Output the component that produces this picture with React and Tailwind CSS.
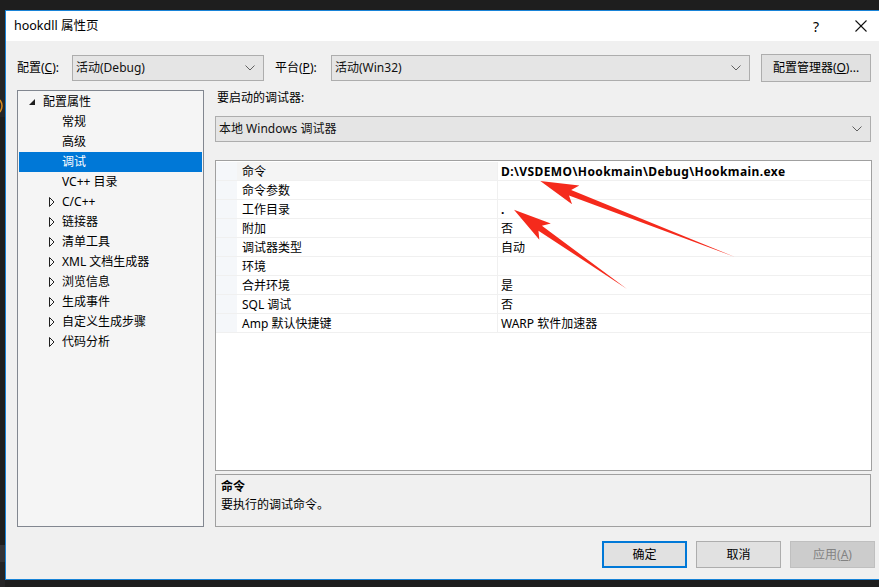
import React from "react";

const treeItems = [
  { label: "配置属性", level: 0 },
  { label: "常规", level: 1 },
  { label: "高级", level: 1 },
  { label: "调试", level: 1, selected: true },
  { label: "VC++ 目录", level: 1 },
  { label: "C/C++", level: 1, expander: true },
  { label: "链接器", level: 1, expander: true },
  { label: "清单工具", level: 1, expander: true },
  { label: "XML 文档生成器", level: 1, expander: true },
  { label: "浏览信息", level: 1, expander: true },
  { label: "生成事件", level: 1, expander: true },
  { label: "自定义生成步骤", level: 1, expander: true },
  { label: "代码分析", level: 1, expander: true },
];

const props = [
  { name: "命令", value: "D:\\VSDEMO\\Hookmain\\Debug\\Hookmain.exe", bold: true, active: true },
  { name: "命令参数", value: "" },
  { name: "工作目录", value: ".", bold: true },
  { name: "附加", value: "否" },
  { name: "调试器类型", value: "自动" },
  { name: "环境", value: "" },
  { name: "合并环境", value: "是" },
  { name: "SQL 调试", value: "否" },
  { name: "Amp 默认快捷键", value: "WARP 软件加速器" },
];

function Chevron() {
  return (
    <svg width="10" height="6" viewBox="0 0 10 6" className="shrink-0">
      <polyline points="0.5,0.5 5,5 9.5,0.5" fill="none" stroke="#606060" strokeWidth="1" />
    </svg>
  );
}

function Combo({ width, children }) {
  return (
    <div
      className={`${width} h-[26px] flex items-center justify-between pl-[3px] pr-[8px] bg-[#e5e5e5] border border-[#adadad] text-[#111]`}
    >
      <span>{children}</span>
      <Chevron />
    </div>
  );
}

function Arrow({ x, y, angle, len }) {
  // tail at (x,y), pointing along angle
  const L = len;
  return (
    <g transform={`translate(${x} ${y}) rotate(${angle})`}>
      <polygon
        points={`0,0 ${L - 32},-3 ${L - 38},-10 ${L},0 ${L - 38},10 ${L - 32},3`}
        fill="#f52a1c"
      />
    </g>
  );
}

export default function App() {
  return (
    <div className="relative w-[879px] h-[587px] overflow-hidden bg-[#1e1e1e] font-['Noto_Sans','Noto_Sans_CJK_SC',sans-serif] text-[12px] text-black">
      <div className="flex h-full">
        {/* editor edge behind the dialog */}
        <div className="w-[5px] shrink-0 flex flex-col">
          <div className="h-[10px] bg-[#1e1e1e]" />
          <div className="h-[85px] bg-[#252526]" />
          <div className="h-[22px] bg-[#252526] flex items-center">
            <svg width="5" height="14" viewBox="0 0 5 14">
              <path d="M0 1 Q4 7 0 13" fill="none" stroke="#d7891c" strokeWidth="1.5" />
            </svg>
          </div>
          <div className="h-[428px] bg-[#1e1e1e]" />
          <div className="h-[17px] bg-[#333337]" />
          <div className="flex-1 bg-[#252526]" />
        </div>

        {/* dialog */}
        <div className="mt-[10px] w-[882px] h-[570px] shrink-0 border-t border-l border-b border-[#1883d7] flex flex-col bg-[#f0f0f0]">
          {/* title bar */}
          <div className="h-[30px] bg-white flex items-center pl-[8px] pr-[16px]">
            <span className="text-[12.5px]">hookdll 属性页</span>
            <div className="ml-auto flex items-center">
              <span className="text-[14px] mr-[36px]">?</span>
              <svg width="12" height="12" viewBox="0 0 12 12" className="mr-[4px]">
                <line x1="0.5" y1="0.5" x2="11.5" y2="11.5" stroke="#111" strokeWidth="1.1" />
                <line x1="11.5" y1="0.5" x2="0.5" y2="11.5" stroke="#111" strokeWidth="1.1" />
              </svg>
            </div>
          </div>

          {/* body */}
          <div className="flex-1 flex flex-col pl-[11px] pt-[13px]">
            {/* config row */}
            <div className="h-[28px] flex items-center">
              <span className="w-[55px]">
                配置(<u>C</u>):
              </span>
              <Combo width="w-[192px]">活动(Debug)</Combo>
              <span className="w-[56px] ml-[11px]">
                平台(<u>P</u>):
              </span>
              <Combo width="w-[419px]">活动(Win32)</Combo>
              <div className="ml-[11px] w-[110px] h-[28px] flex items-center justify-center bg-[#e1e1e1] border border-[#adadad]">
                配置管理器(<u>O</u>)...
              </div>
            </div>

            {/* main area */}
            <div className="mt-[8px] h-[437px] flex">
              {/* tree */}
              <div className="w-[187px] h-full border border-[#828790] bg-[#f5f5f5] px-[1px] pt-[1px]">
                {treeItems.map((item) => (
                  <div
                    key={item.label}
                    className={`h-[20px] flex items-center ${
                      item.selected ? "bg-[#0078d7] text-white" : ""
                    }`}
                  >
                    {item.level === 0 ? (
                      <>
                        <svg width="6" height="6" viewBox="0 0 6 6" className="ml-[10px]">
                          <polygon points="6,0 6,6 0,6" fill="#1e1e1e" />
                        </svg>
                        <span className="ml-[8px]">{item.label}</span>
                      </>
                    ) : (
                      <>
                        <span className="w-[30px] shrink-0" />
                        <span className="w-[13px] shrink-0 flex items-center">
                          {item.expander && (
                            <svg width="6" height="10" viewBox="0 0 6 10">
                              <polygon points="0.5,0.5 5,5 0.5,9.5" fill="none" stroke="#1e1e1e" strokeWidth="1" />
                            </svg>
                          )}
                        </span>
                        <span>{item.label}</span>
                      </>
                    )}
                  </div>
                ))}
              </div>

              {/* right column */}
              <div className="ml-[11px] w-[657px] flex flex-col">
                <div className="h-[16px] flex items-center pl-[2px]">要启动的调试器:</div>
                <div className="mt-[10px]">
                  <Combo width="w-[656px]">本地 Windows 调试器</Combo>
                </div>

                {/* property grid */}
                <div className="mt-[18px] h-[311px] border border-[#a0a0a0] bg-white pt-[1px]">
                  {props.map((p) => (
                    <div key={p.name} className="h-[19px] flex border-b border-[#f0f0f0]">
                      <div className="w-[21px] shrink-0 bg-[#f5f7fa]" />
                      <div
                        className={`w-[261px] shrink-0 pl-[5px] pt-[2px] flex items-center border-r border-[#f0f0f0] ${
                          p.active ? "bg-[#f4f4f4]" : ""
                        }`}
                      >
                        {p.name}
                      </div>
                      <div
                        className={`flex-1 pl-[3px] pt-[2px] flex items-center ${
                          p.bold ? "font-bold tracking-[0.4px]" : ""
                        }`}
                      >
                        {p.value}
                      </div>
                    </div>
                  ))}
                </div>

                {/* description */}
                <div className="mt-[3px] flex-1 border border-[#a0a0a0] bg-[#f0f0f0] pl-[5px] pt-[3px] mr-[1px]">
                  <div className="font-bold leading-[18px]">命令</div>
                  <div className="leading-[18px]">要执行的调试命令。</div>
                </div>
              </div>
            </div>

            {/* buttons */}
            <div className="mt-[14px] flex justify-end gap-[9px] pr-[12px]">
              <div className="w-[85px] h-[27px] flex items-center justify-center bg-[#e1e1e1] border-2 border-[#0078d7]">
                确定
              </div>
              <div className="w-[85px] h-[27px] flex items-center justify-center bg-[#e1e1e1] border border-[#adadad]">
                取消
              </div>
              <div className="w-[85px] h-[27px] flex items-center justify-center bg-[#cccccc] border border-[#bfbfbf] text-[#838383]">
                应用(<u>A</u>)
              </div>
            </div>
          </div>
        </div>
      </div>

      {/* annotation arrows */}
      <svg className="absolute inset-0 pointer-events-none" width="879" height="587" viewBox="0 0 879 587">
        <Arrow x={735} y={257} angle={201.3} len={209} />
        <Arrow x={627} y={289} angle={215} len={138} />
      </svg>
    </div>
  );
}
